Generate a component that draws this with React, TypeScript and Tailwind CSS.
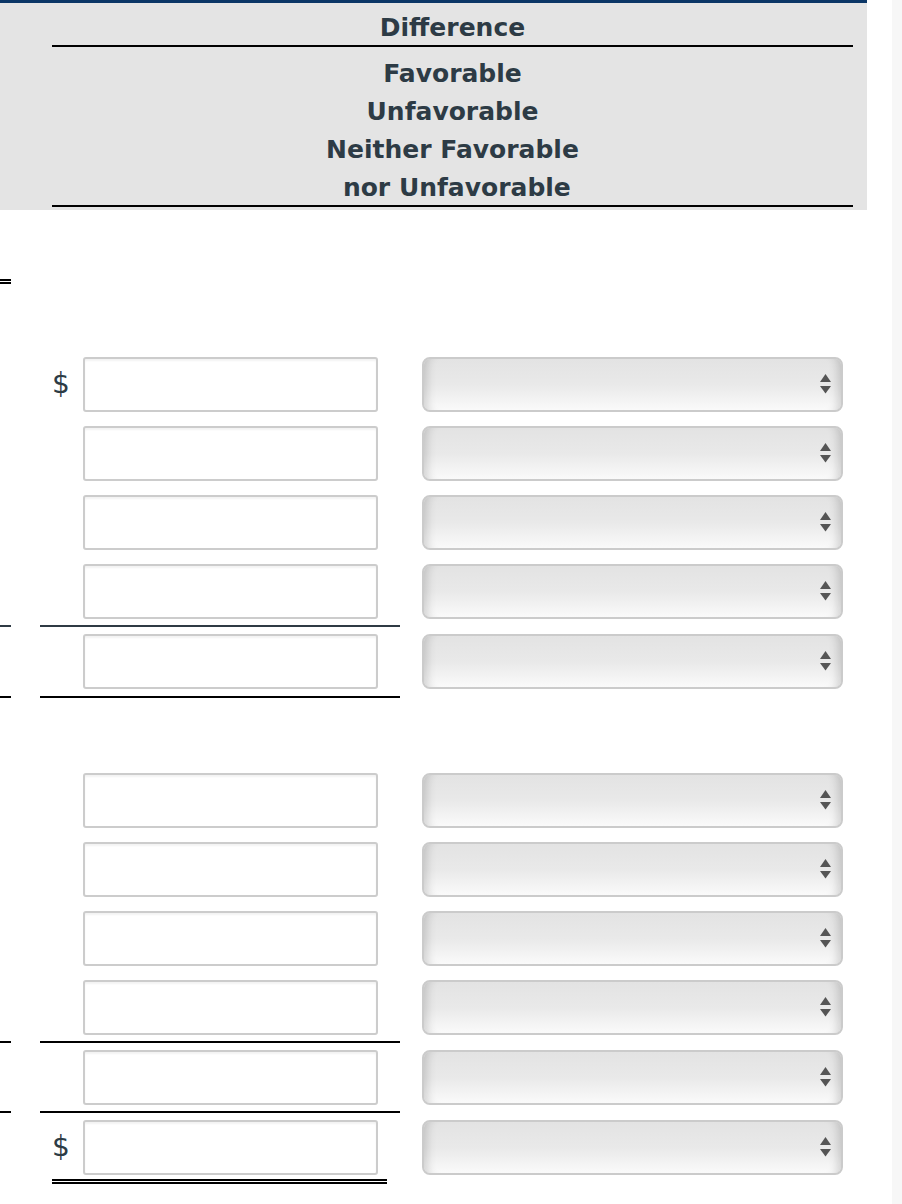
import React from "react";

type Row = {
  dollar?: boolean;
  line?: "solid" | "dark" | "double";
  h: string;
};

const topRows: Row[] = [
  { dollar: true, h: "h-[69px]" },
  { h: "h-[69px]" },
  { h: "h-[69px]" },
  { line: "dark", h: "h-[70px]" },
  { line: "solid", h: "h-[71px]" },
];

const bottomRows: Row[] = [
  { h: "h-[69px]" },
  { h: "h-[69px]" },
  { h: "h-[69px]" },
  { line: "solid", h: "h-[70px]" },
  { line: "solid", h: "h-[70px]" },
];

function SelectBox() {
  return (
    <div className="relative w-[421px] h-[55px]">
      <select
        defaultValue=""
        className="appearance-none w-full h-full rounded-[8px] border-2 border-[#cbcbcb] bg-linear-to-b from-[#e3e3e3] via-[#e9e9e9] to-[#fafafa] shadow-[inset_12px_0_10px_-9px_rgba(0,0,0,0.16),inset_-12px_0_10px_-9px_rgba(0,0,0,0.16)] outline-none"
      >
        <option value=""></option>
        <option>Favorable</option>
        <option>Unfavorable</option>
        <option>Neither Favorable nor Unfavorable</option>
      </select>
      <svg
        className="pointer-events-none absolute right-[12px] top-[17px]"
        width="11"
        height="20"
        viewBox="0 0 11 20"
      >
        <polygon points="5.5,0 11,8 0,8" fill="#555555" />
        <polygon points="0,12 11,12 5.5,19.5" fill="#555555" />
      </svg>
    </div>
  );
}

function AmountRow({ row }: { row: Row }) {
  const stubLine =
    row.line === "dark"
      ? "border-b-2 border-[#2f3a44]"
      : row.line === "solid"
      ? "border-b-2 border-black"
      : "";
  return (
    <div className={`flex ${row.h}`}>
      <div className={`w-[11px] ${stubLine}`} />
      <div className={`ml-[29px] w-[360px] pl-[12px] pt-[7px] ${stubLine}`}>
        <div
          className={`flex items-center w-[335px] ${
            row.line === "double" ? "border-b-[5px] border-double border-black pb-[4px]" : ""
          }`}
        >
          <span className="w-[31px] text-[28px] text-[#2d3b45] leading-none pb-[2px]">
            {row.dollar ? "$" : ""}
          </span>
          <input
            type="text"
            className="w-[295px] h-[55px] rounded-[3px] border-2 border-[#cccccc] bg-white shadow-[inset_0_2px_2px_rgba(0,0,0,0.05)] outline-none px-2"
          />
        </div>
      </div>
      <div className="ml-[22px] pt-[7px]">
        <SelectBox />
      </div>
    </div>
  );
}

export default function App() {
  return (
    <div
      className="flex min-h-screen h-[1204px] bg-white"
      style={{ fontFamily: '"DejaVu Sans", Verdana, sans-serif' }}
    >
      <div className="w-[892px] overflow-hidden">
        {/* Header */}
        <div className="w-[867px] bg-[#e4e4e4] border-t-[3px] border-[#0b3666] pb-[3px]">
          <div className="ml-[52px] w-[801px] text-center font-bold text-[25px] text-[#2d3b45]">
            <div className="pt-[8px] leading-[34px] border-b-2 border-black">Difference</div>
            <div className="h-[160px] pt-[8px] leading-[38px] border-b-2 border-black">
              <div>Favorable</div>
              <div>Unfavorable</div>
              <div>Neither Favorable</div>
              <div>&nbsp;nor Unfavorable</div>
            </div>
          </div>
        </div>

        {/* Gap above rows */}
        <div className="h-[140px]">
          <div className="w-[11px] h-[74px] border-b-[5px] border-double border-black" />
        </div>

        {topRows.map((r, i) => (
          <AmountRow key={`t${i}`} row={r} />
        ))}

        <div className="h-[68px]" />

        {bottomRows.map((r, i) => (
          <AmountRow key={`b${i}`} row={r} />
        ))}

        <AmountRow row={{ dollar: true, line: "double", h: "h-[80px]" }} />
      </div>
      <div className="flex-1 bg-[#f7f7f7]" />
    </div>
  );
}
